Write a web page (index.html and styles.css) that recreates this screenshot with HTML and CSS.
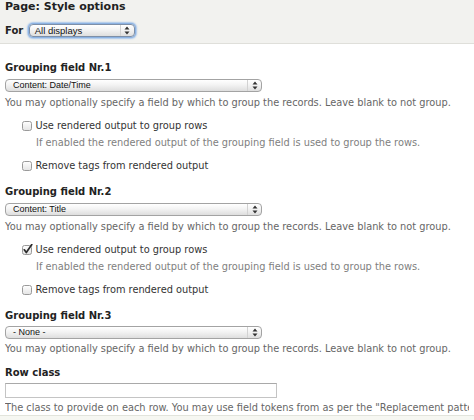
FILE: index.html
```html
<!DOCTYPE html>
<html>
<head>
<meta charset="utf-8">
<link rel="stylesheet" href="styles.css">
</head>
<body>
<div class="header">
  <h1 class="title">Page: Style options</h1>
  <div class="for-row">
    <span class="for-label">For</span>
    <div class="select select-focus">
      <span class="select-text select-text-lg">All displays</span>
      <span class="arrows"><svg width="6" height="9" viewBox="0 0 6 9"><path d="M3 0.5 L5.5 3.5 L0.5 3.5 Z M3 8.5 L5.5 5.5 L0.5 5.5 Z" fill="#333"/></svg></span>
    </div>
  </div>
</div>
<div class="content">
  <div class="group">
    <div class="heading">Grouping field Nr.1</div>
    <div class="select select-wide">
      <span class="select-text">Content: Date/Time</span>
      <span class="arrows"><svg width="6" height="9" viewBox="0 0 6 9"><path d="M3 0.5 L5.5 3.5 L0.5 3.5 Z M3 8.5 L5.5 5.5 L0.5 5.5 Z" fill="#333"/></svg></span>
    </div>
    <div class="desc">You may optionally specify a field by which to group the records. Leave blank to not group.</div>
    <div class="check-row">
      <svg class="cb" width="12" height="12" viewBox="0 0 12 12"><defs><linearGradient id="g1" x1="0" y1="0" x2="0" y2="1"><stop offset="0" stop-color="#ffffff"/><stop offset="1" stop-color="#e4e4e4"/></linearGradient></defs><rect x="1.5" y="1.5" width="9" height="9" rx="2" fill="url(#g1)" stroke="#9a9a9a"/></svg>
      <span class="label">Use rendered output to group rows</span>
    </div>
    <div class="hint">If enabled the rendered output of the grouping field is used to group the rows.</div>
    <div class="check-row">
      <svg class="cb" width="12" height="12" viewBox="0 0 12 12"><rect x="1.5" y="1.5" width="9" height="9" rx="2" fill="url(#g1)" stroke="#9a9a9a"/></svg>
      <span class="label">Remove tags from rendered output</span>
    </div>
  </div>
  <div class="group">
    <div class="heading">Grouping field Nr.2</div>
    <div class="select select-wide">
      <span class="select-text">Content: Title</span>
      <span class="arrows"><svg width="6" height="9" viewBox="0 0 6 9"><path d="M3 0.5 L5.5 3.5 L0.5 3.5 Z M3 8.5 L5.5 5.5 L0.5 5.5 Z" fill="#333"/></svg></span>
    </div>
    <div class="desc">You may optionally specify a field by which to group the records. Leave blank to not group.</div>
    <div class="check-row">
      <svg class="cb" width="12" height="12" viewBox="0 0 12 12"><rect x="1.5" y="1.5" width="9" height="9" rx="2" fill="url(#g1)" stroke="#9a9a9a"/><path d="M3.3 5.8 L5.3 8.6 L10.8 0.6" fill="none" stroke="#2b2b2b" stroke-width="1.7" stroke-linecap="round" stroke-linejoin="round"/></svg>
      <span class="label">Use rendered output to group rows</span>
    </div>
    <div class="hint">If enabled the rendered output of the grouping field is used to group the rows.</div>
    <div class="check-row">
      <svg class="cb" width="12" height="12" viewBox="0 0 12 12"><rect x="1.5" y="1.5" width="9" height="9" rx="2" fill="url(#g1)" stroke="#9a9a9a"/></svg>
      <span class="label">Remove tags from rendered output</span>
    </div>
  </div>
  <div class="group group-last">
    <div class="heading">Grouping field Nr.3</div>
    <div class="select select-wide">
      <span class="select-text">- None -</span>
      <span class="arrows"><svg width="6" height="9" viewBox="0 0 6 9"><path d="M3 0.5 L5.5 3.5 L0.5 3.5 Z M3 8.5 L5.5 5.5 L0.5 5.5 Z" fill="#333"/></svg></span>
    </div>
    <div class="desc">You may optionally specify a field by which to group the records. Leave blank to not group.</div>
  </div>
  <div class="group group-row">
    <div class="heading">Row class</div>
    <div class="text-input"></div>
    <div class="desc">The class to provide on each row. You may use field tokens from as per the "Replacement patterns" used in "Rewrite the output of this field" for all fields.</div>
  </div>
</div>
<div class="footer"></div>
</body>
</html>
```

FILE: styles.css
```css
html, body {
  margin: 0;
  padding: 0;
  background: #ffffff;
  overflow: hidden;
}
body {
  font-family: "DejaVu Sans", Verdana, sans-serif;
  width: 474px;
  height: 420px;
}
.header {
  background: #f2f2ef;
  border-bottom: 1px solid #dfdfda;
  padding: 0 5px 6px 5px;
}
.title {
  margin: 0;
  font-size: 11px;
  font-weight: bold;
  line-height: 13px;
  color: #222;
}
.for-row {
  display: flex;
  align-items: center;
  margin-top: 11px;
  height: 13px;
}
.for-label {
  font-size: 10px;
  font-weight: bold;
  line-height: 12px;
  color: #222;
  margin-right: 5.5px;
}
.select {
  display: flex;
  align-items: center;
  box-sizing: border-box;
  height: 13px;
  border: 1px solid #a3a3a3;
  border-radius: 4px;
  background: linear-gradient(#ffffff, #f3f3f3 45%, #dedede);
  overflow: hidden;
}
.select-focus {
  width: 106px;
  box-shadow: 0 0 0 1px #8cb2e2, 0 0 1.5px 2px #a9c6ea;
  border-color: #7d8fa8;
}
.select-wide {
  width: 257px;
  margin-top: 5px;
}
.select-text {
  flex: 1;
  font-family: "Liberation Sans", Arial, sans-serif;
  font-size: 9px;
  line-height: 11px;
  color: #111;
  padding-left: 7px;
  white-space: nowrap;
}
.select-text-lg {
  font-size: 9.5px;
  padding-left: 5px;
}
.arrows {
  width: 13px;
  height: 11px;
  display: flex;
  align-items: center;
  justify-content: center;
  border-left: 1px solid #d2d2d2;
}
.content {
  padding: 18px 5px 0 5px;
}
.group {
  margin-bottom: 14px;
}
.heading {
  font-size: 10px;
  font-weight: bold;
  line-height: 12px;
  color: #222;
}
.desc {
  font-size: 9.8px;
  line-height: 12px;
  color: #666;
  margin-top: 5px;
  white-space: nowrap;
}
.check-row {
  display: flex;
  align-items: center;
  margin-top: 11px;
  padding-left: 16px;
  height: 12px;
}
.cb {
  display: block;
  margin-right: 2.5px;
}
.label {
  font-size: 9.8px;
  line-height: 12px;
  color: #333;
}
.hint {
  font-size: 9.8px;
  line-height: 12px;
  color: #808080;
  margin-top: 5px;
  padding-left: 31px;
  white-space: nowrap;
}
.group-last {
  margin-bottom: 12px;
}
.group-last .select-wide {
  margin-top: 4px;
}
.group-last .desc {
  margin-top: 4px;
}
.group-row {
  margin-bottom: 0;
}
.text-input {
  box-sizing: border-box;
  width: 272px;
  height: 15px;
  margin-top: 4px;
  border: 1px solid #c4c4c4;
  border-top-color: #a9a9a9;
  background: #fff;
}
.group-row .desc {
  margin-top: 4px;
  overflow: hidden;
}
.footer {
  margin-top: 1px;
  height: 10px;
  border-top: 1px solid #e2e4dc;
  background: #f6f7f2;
}
```
